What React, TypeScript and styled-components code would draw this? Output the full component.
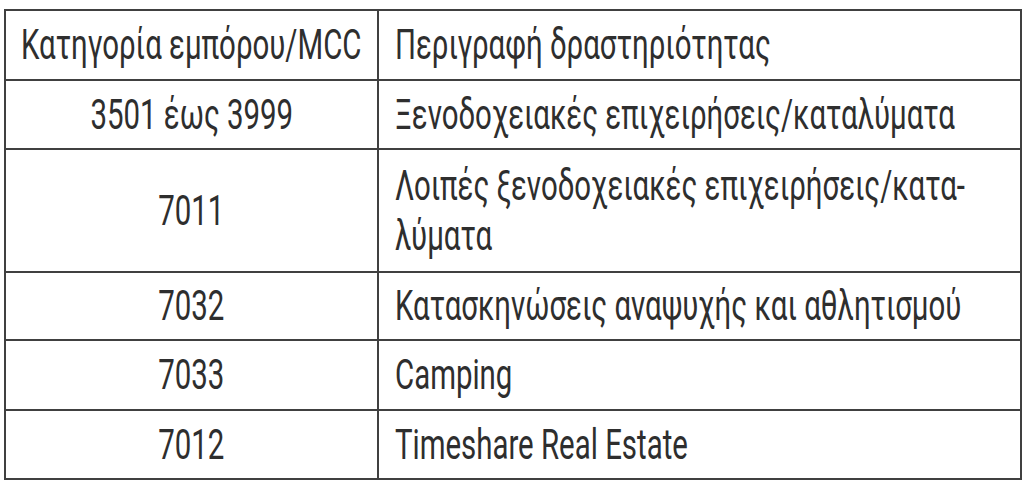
import React from "react";
import styled, { createGlobalStyle } from "styled-components";

const GlobalStyle = createGlobalStyle`
  html, body {
    margin: 0;
    padding: 0;
    background: #ffffff;
  }
  body {
    font-family: Roboto, "Liberation Sans", sans-serif;
  }
`;

const Page = styled.div`
  width: 1024px;
  height: 485px;
  padding: 9px 0 0 4px;
  box-sizing: border-box;
  background: #ffffff;
  overflow: hidden;
`;

const Table = styled.table`
  width: 1018px;
  border-collapse: collapse;
  table-layout: fixed;
  border: 2px solid #404040;
  color: #2e2e2e;
  font-size: 42px;
  line-height: 50px;
`;

const Row = styled.tr<{ $height: number }>`
  height: ${(p) => p.$height}px;
`;

const Cell = styled.td`
  border: 2px solid #404040;
  padding: 0 16px;
  vertical-align: middle;
  overflow: hidden;
`;

const CellInner = styled.div<{ $center?: boolean }>`
  display: flex;
  justify-content: ${(p) => (p.$center ? "center" : "flex-start")};
`;

// condensed face: narrow the regular face horizontally
const Label = styled.span<{ $center?: boolean }>`
  flex: none;
  white-space: pre;
  transform: scaleX(0.7);
  transform-origin: ${(p) => (p.$center ? "center" : "left")} center;
`;

const CodeCol = styled.col`
  width: 373px;
`;

const rows: { code: string; text: string; height: number }[] = [
  { code: "3501 έως 3999", text: "Ξενοδοχειακές επιχειρήσεις/καταλύματα", height: 69 },
  { code: "7011", text: "Λοιπές ξενοδοχειακές επιχειρήσεις/κατα-\nλύματα", height: 123 },
  { code: "7032", text: "Κατασκηνώσεις αναψυχής και αθλητισμού", height: 68 },
  { code: "7033", text: "Camping", height: 70 },
  { code: "7012", text: "Timeshare Real Estate", height: 69 },
];

const TextCell: React.FC<{ center?: boolean; children: React.ReactNode }> = ({
  center,
  children,
}) => (
  <Cell>
    <CellInner $center={center}>
      <Label $center={center}>{children}</Label>
    </CellInner>
  </Cell>
);

export default function App() {
  return (
    <Page>
      <GlobalStyle />
      <Table>
        <colgroup>
          <CodeCol />
          <col />
        </colgroup>
        <tbody>
          <Row $height={70}>
            <TextCell center>Κατηγορία εμπόρου/MCC</TextCell>
            <TextCell>Περιγραφή δραστηριότητας</TextCell>
          </Row>
          {rows.map((r) => (
            <Row key={r.code} $height={r.height}>
              <TextCell center>{r.code}</TextCell>
              <TextCell>{r.text}</TextCell>
            </Row>
          ))}
        </tbody>
      </Table>
    </Page>
  );
}
